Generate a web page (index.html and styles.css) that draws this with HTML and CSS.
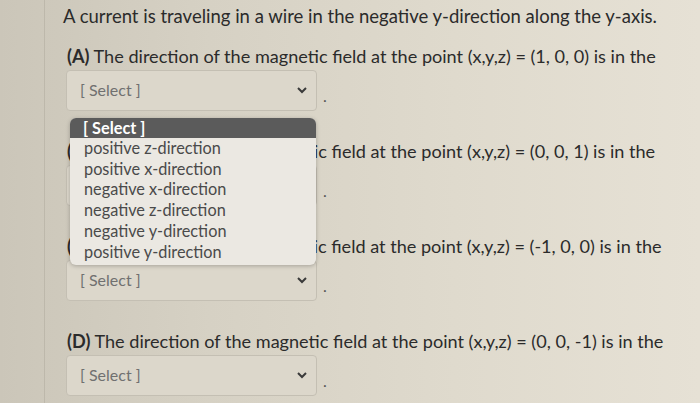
FILE: index.html
```html
<!DOCTYPE html>
<html lang="en">
  <head>
    <meta charset="utf-8" />
    <title>Magnetic field question</title>
    <link rel="stylesheet" href="styles.css">
  </head>
  <body>
    <div class="page">
      <p class="intro">A current is traveling in a wire in the negative y-direction along the y-axis.</p>

      <!--Part A, with its list opened-->
      <div class="part">
        <p class="question"><b>(A)</b> The direction of the magnetic field at the point (x,y,z) = (1, 0, 0) is in the</p>
        <div class="answerRow">
          <div class="selectBox">
            <span class="selectText">[ Select ]</span>
            <svg class="chevron" width="10" height="7" viewBox="0 0 10 7"><polyline points="1,1 5,5 9,1" /></svg>
            <ul class="dropList">
              <li class="chosen">[ Select ]</li>
              <li>positive z-direction</li>
              <li>positive x-direction</li>
              <li>negative x-direction</li>
              <li>negative z-direction</li>
              <li>negative y-direction</li>
              <li>positive y-direction</li>
            </ul>
          </div>
          <span class="dot">.</span>
        </div>
      </div>

      <div class="part">
        <p class="question"><b>(B)</b> The direction of the magnetic field at the point (x,y,z) = (0, 0, 1) is in the</p>
        <div class="answerRow">
          <div class="selectBox">
            <span class="selectText">[ Select ]</span>
            <svg class="chevron" width="10" height="7" viewBox="0 0 10 7"><polyline points="1,1 5,5 9,1" /></svg>
          </div>
          <span class="dot">.</span>
        </div>
      </div>

      <div class="part">
        <p class="question"><b>(C)</b> The direction of the magnetic field at the point (x,y,z) = (-1, 0, 0) is in the</p>
        <div class="answerRow">
          <div class="selectBox">
            <span class="selectText">[ Select ]</span>
            <svg class="chevron" width="10" height="7" viewBox="0 0 10 7"><polyline points="1,1 5,5 9,1" /></svg>
          </div>
          <span class="dot">.</span>
        </div>
      </div>

      <div class="part">
        <p class="question"><b>(D)</b> The direction of the magnetic field at the point (x,y,z) = (0, 0, -1) is in the</p>
        <div class="answerRow">
          <div class="selectBox">
            <span class="selectText">[ Select ]</span>
            <svg class="chevron" width="10" height="7" viewBox="0 0 10 7"><polyline points="1,1 5,5 9,1" /></svg>
          </div>
          <span class="dot">.</span>
        </div>
      </div>
    </div>
  </body>
</html>
```

FILE: styles.css
```css
body {margin: 0;
      height: 403px;
      overflow: hidden;
      font-family: Lato, "Open Sans", sans-serif;
      color: #2b2b2b;
      background: linear-gradient(to right, #cbc6b9 0%, #d6d1c4 30%, #dfdacd 65%, #e6e1d5 100%);}

.page {margin-left: 44px;
       padding-left: 18px;
       border-left: 1px solid #bdb8ab;
       height: 100%;}

p {margin: 0;}

.intro {padding-top: 5px;
        font-size: 18.5px;
        line-height: 22px;}

.part {margin-top: 18px;}
.part + .part {margin-top: 29px;}

.question {font-size: 18.1px;
           line-height: 22px;
           padding-left: 4px;}

.question b {font-weight: 700;}

.answerRow {display: flex;
            align-items: flex-end;
            margin-top: 3px;
            margin-left: 3px;}

.selectBox {position: relative;
            display: flex;
            align-items: center;
            justify-content: space-between;
            box-sizing: border-box;
            width: 251px;
            height: 41px;
            padding: 0 9px 0 13px;
            border: 1px solid #c4bfb3;
            border-radius: 4px;
            background-color: #dcd7cb;}

.selectText {font-size: 16px;
             color: #707070;
             margin-top: -3px;}

.chevron polyline {fill: none;
                   stroke: #3a3a3a;
                   stroke-width: 2;}

.dot {margin-left: 6px;
      margin-bottom: 6px;
      font-size: 16px;
      color: #555;}

.dropList {position: absolute;
           top: 47px;
           left: 3px;
           width: 246px;
           margin: 0;
           padding: 0 0 3px 0;
           list-style: none;
           background-color: #ebe8e2;
           border-radius: 6px;
           box-shadow: 0 1px 4px rgba(0, 0, 0, 0.25);
           z-index: 2;
           overflow: hidden;}

.dropList li {padding-left: 14px;
              font-size: 16.3px;
              line-height: 20.7px;
              color: #4a4a4a;}

.dropList .chosen {padding-left: 13px;
                   background-color: #5b5b5b;
                   color: #ffffff;
                   font-weight: 700;
                   line-height: 20px;}
```
